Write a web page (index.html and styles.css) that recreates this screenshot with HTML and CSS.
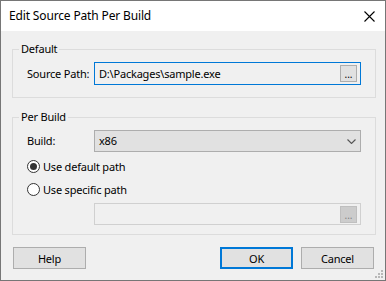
FILE: index.html
```html
<!DOCTYPE html>
<html>
<head>
<meta charset="utf-8">
<link rel="stylesheet" href="styles.css">
</head>
<body>
<div class="window">
  <div class="titlebar">
    <span class="title">Edit Source Path Per Build</span>
    <svg class="close" width="11" height="11" viewBox="0 0 11 11"><path d="M0.5 0.5 L10.5 10.5 M10.5 0.5 L0.5 10.5" stroke="#000" stroke-width="1.1" fill="none"/></svg>
  </div>
  <div class="client">
    <div class="group g1">
      <span class="legend">Default</span>
      <div class="row">
        <span class="label">Source Path:</span>
        <div class="textbox focused"><span class="value">D:\Packages\sample.exe</span><span class="browse">...</span></div>
      </div>
    </div>
    <div class="group g2">
      <span class="legend">Per Build</span>
      <div class="row">
        <span class="label">Build:</span>
        <div class="combo"><span class="value">x86</span><svg class="chev" width="9" height="5" viewBox="0 0 9 5"><path d="M0.5 0.5 L4.5 4.5 L8.5 0.5" stroke="#555" stroke-width="1.1" fill="none"/></svg></div>
      </div>
      <div class="radio first"><svg width="13" height="13" viewBox="0 0 13 13"><circle cx="6.5" cy="6.5" r="6" fill="#fff" stroke="#333"/><circle cx="6.5" cy="6.5" r="3.5" fill="#333"/></svg><span>Use default path</span></div>
      <div class="radio"><svg width="13" height="13" viewBox="0 0 13 13"><circle cx="6.5" cy="6.5" r="6" fill="#fff" stroke="#333"/></svg><span>Use specific path</span></div>
      <div class="row indent">
        <div class="textbox disabled"><span class="value"></span><span class="browse off">...</span></div>
      </div>
    </div>
    <div class="buttons">
      <button class="btn">Help</button>
      <span class="spacer"></span>
      <button class="btn default">OK</button>
      <button class="btn">Cancel</button>
    </div>
  </div>
  <svg class="grip" width="9" height="9" viewBox="0 0 9 9"><g fill="#b8b8b8"><rect x="6" y="0" width="2" height="2"/><rect x="3" y="3" width="2" height="2"/><rect x="6" y="3" width="2" height="2"/><rect x="0" y="6" width="2" height="2"/><rect x="3" y="6" width="2" height="2"/><rect x="6" y="6" width="2" height="2"/></g></svg>
</div>
</body>
</html>
```

FILE: styles.css
```css
* { box-sizing: border-box; }
html, body { margin: 0; padding: 0; background: #f0f0f0; }
body { font-family: "Noto Sans", "Open Sans", sans-serif; font-size: 11px; letter-spacing: -0.2px; color: #000; }

.window {
  position: relative;
  width: 386px;
  height: 281px;
  border: 1px solid #767676;
  background: #f0f0f0;
  display: flex;
  flex-direction: column;
}

.titlebar {
  height: 30px;
  background: #fff;
  display: flex;
  align-items: center;
  padding-left: 8px;
  padding-right: 10px;
  flex: none;
}
.title { flex: 1; font-size: 12px; letter-spacing: -0.15px; line-height: 16px; }
.close { display: block; }

.client { flex: 1; display: flex; flex-direction: column; }

.group {
  position: relative;
  border: 1px solid #dcdcdc;
  margin: 0 9px 0 11px;
  padding: 12px 14px;
}
.g1 { margin-top: 18px; }
.g2 { margin-top: 19px; padding-bottom: 9px; }

.legend {
  position: absolute;
  top: -9px;
  left: 6px;
  padding: 0 2px;
  line-height: 16px;
  background: #f0f0f0;
}

.row { display: flex; align-items: center; }
.label { width: 67px; flex: none; line-height: 16px; }
.indent { padding-left: 67px; margin-top: 2px; }

.textbox {
  flex: 1;
  height: 23px;
  border: 1px solid #7a7a7a;
  background: #f0f0f0;
  display: flex;
  align-items: center;
  padding: 0 3px 0 4px;
}
.textbox.focused { border-color: #0078d7; }
.textbox.disabled { height: 22px; border-color: #d0d0d0; }
.textbox .value { flex: 1; line-height: 16px; white-space: nowrap; }

.browse {
  width: 17px;
  height: 17px;
  border: 1px solid #adadad;
  background: #e1e1e1;
  font-size: 10px;
  letter-spacing: 0;
  line-height: 17px;
  text-align: center;
  color: #000;
}
.browse.off { background: #cccccc; border-color: #bfbfbf; color: #838383; }

.combo {
  flex: 1;
  height: 22px;
  border: 1px solid #adadad;
  background: #e1e1e1;
  display: flex;
  align-items: center;
  padding: 0 4px 0 4px;
}
.combo .value { flex: 1; line-height: 16px; }
.chev { display: block; }

.radio {
  height: 23px;
  display: flex;
  align-items: center;
  gap: 3px;
}
.radio.first { margin-top: 3px; }
.radio svg { display: block; flex: none; }

.buttons {
  display: flex;
  margin: 12px 11px 0 12px;
}
.spacer { flex: 1; }
.btn {
  width: 73px;
  height: 22px;
  border: 1px solid #adadad;
  background: #e1e1e1;
  font: inherit;
  letter-spacing: inherit;
  color: #000;
  padding: 0;
  margin: 0;
}
.btn.default { border: 2px solid #0078d7; margin-right: 8px; }

.grip { position: absolute; right: 1px; bottom: 1px; display: block; }
```
